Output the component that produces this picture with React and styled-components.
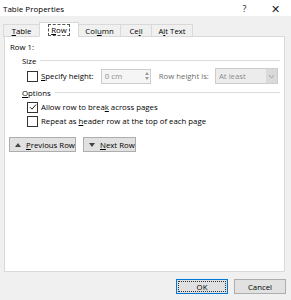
import React from 'react'
import styled, { createGlobalStyle } from 'styled-components'

const Global = createGlobalStyle`
    body {
        margin: 0;
        background: #f0f0f0;
        font-family: "Open Sans", "Noto Sans", sans-serif;
        font-size: 7.8px;
        color: #000;
    }
`

const Dialog = styled.div`
    width: 291px;
    height: 300px;
    display: flex;
    flex-direction: column;
    background: #f0f0f0;
    overflow: hidden;
    white-space: nowrap;
`

const TitleBar = styled.div`
    height: 16px;
    background: #fff;
    display: flex;
    align-items: center;
    padding-left: 3px;
    font-size: 8px;
`

const Title = styled.div`
    flex: 1;
`

const TitleButton = styled.div`
    width: 31px;
    text-align: center;
    font-size: ${props => props.size || '9px'};
    color: #222;
`

const TabStrip = styled.div`
    height: 20px;
    display: flex;
    align-items: flex-end;
    padding-left: 4px;
    position: relative;
    z-index: 1;
`

const Tab = styled.div`
    height: ${props => props.active ? '15px' : '13px'};
    width: ${props => props.w}px;
    display: flex;
    align-items: center;
    justify-content: center;
    background: ${props => props.active ? '#fff' : '#f0f0f0'};
    border: 1px solid #d9d9d9;
    border-bottom: ${props => props.active ? '1px solid #fff' : '1px solid #d9d9d9'};
    margin-left: -1px;
    margin-bottom: -1px;
    box-sizing: border-box;
`

const TabLabel = styled.span`
    padding: 0 2px;
    border: 1px dashed ${props => props.active ? '#555' : 'transparent'};
    line-height: 10px;
`

const Panel = styled.div`
    height: 236px;
    margin: 0 6px 0 4px;
    background: #fff;
    border: 1px solid #d9d9d9;
    box-sizing: border-box;
    padding: 5px 4px 0 5px;
    display: flex;
    flex-direction: column;
`

const Heading = styled.div`
    height: 11px;
    line-height: 11px;
`

const GroupTitle = styled.div`
    display: flex;
    align-items: center;
    gap: 4px;
    margin-left: 12px;
    height: 11px;
    margin-top: ${props => props.top || 0}px;
`

const Rule = styled.div`
    flex: 1;
    height: 1px;
    background: #dcdcdc;
`

const Row = styled.div`
    display: flex;
    align-items: center;
    margin-left: 17px;
    height: ${props => props.h || 14}px;
    margin-top: ${props => props.top || 0}px;
`

const Box = styled.div`
    width: 9px;
    height: 9px;
    border: 1px solid #333;
    background: #fff;
    margin-right: 3px;
    display: flex;
    align-items: center;
    justify-content: center;
    flex-shrink: 0;
`

const Label = styled.span`
    color: ${props => props.disabled ? '#6d6d6d' : '#000'};
    margin-left: ${props => props.ml || 0}px;
`

const SpinField = styled.div`
    width: 50px;
    height: 15px;
    border: 1px solid #cccccc;
    background: #f5f5f5;
    box-sizing: border-box;
    display: flex;
    align-items: center;
    padding-left: 3px;
    color: #8c8c8c;
    margin-left: 7px;
    flex-shrink: 0;
`

const SpinArrows = styled.div`
    margin-left: auto;
    width: 6px;
    display: flex;
    flex-direction: column;
    align-items: center;
    gap: 2px;
`

const Select = styled.div`
    width: 63px;
    height: 16px;
    border: 1px solid #cccccc;
    background: #ececec;
    box-sizing: border-box;
    display: flex;
    align-items: center;
    padding-left: 3px;
    color: #8c8c8c;
    margin-left: 6px;
    flex-shrink: 0;
`

const SelectArrow = styled.div`
    margin-left: auto;
    width: 11px;
    height: 14px;
    background: #dadada;
    display: flex;
    align-items: center;
    justify-content: center;
`

const NavRow = styled.div`
    display: flex;
    gap: 7px;
    margin-top: 9px;
    margin-left: -1px;
`

const NavButton = styled.div`
    width: ${props => props.w}px;
    height: 15px;
    box-sizing: border-box;
    border: 1px solid #adadad;
    background: #e1e1e1;
    display: flex;
    align-items: center;
    padding-left: 5px;
    gap: 5px;
`

const Footer = styled.div`
    display: flex;
    justify-content: flex-end;
    gap: 6px;
    padding: 7px 5px 0 0;
`

const DialogButton = styled.div`
    width: 52px;
    height: 15px;
    box-sizing: border-box;
    border: 1px solid ${props => props.primary ? '#0078d7' : '#adadad'};
    background: #e1e1e1;
    display: flex;
    align-items: center;
    justify-content: center;
    position: relative;
`

const FocusRing = styled.div`
    position: absolute;
    inset: 1px;
    border: 1px dotted #333;
`

const Check = () => (
    <svg width="8" height="8" viewBox="0 0 8 8">
        <path d="M1 4.2 L3 6.2 L7 1.5" fill="none" stroke="#222" strokeWidth="1" />
    </svg>
)

const Tri = ({ up }) => (
    <svg width="6" height="4" viewBox="0 0 6 4">
        <path d={up ? 'M0 4 L3 0 L6 4 Z' : 'M0 0 L3 4 L6 0 Z'} fill="#444" />
    </svg>
)

const tabs = [
    { key: 'T', rest: 'able', w: 37 },
    { key: 'R', rest: 'ow', w: 40, active: true },
    { pre: 'Col', key: 'u', rest: 'mn', w: 43 },
    { pre: 'Ce', key: 'l', rest: 'l', w: 32 },
    { pre: 'A', key: 'l', rest: 't Text', w: 42 },
]

export default function App() {
    return (
        <Dialog>
            <Global />
            <TitleBar>
                <Title>Table Properties</Title>
                <TitleButton>?</TitleButton>
                <TitleButton size="11px">✕</TitleButton>
            </TitleBar>
            <TabStrip>
                {tabs.map((t, i) => (
                    <Tab key={i} w={t.w} active={t.active}>
                        <TabLabel active={t.active}>
                            {t.pre}<u>{t.key}</u>{t.rest}
                        </TabLabel>
                    </Tab>
                ))}
            </TabStrip>
            <Panel>
                <Heading>Row 1:</Heading>
                <GroupTitle top={2}><span>Size</span><Rule /></GroupTitle>
                <Row h={16} top={2}>
                    <Box />
                    <Label><u>S</u>pecify height:</Label>
                    <SpinField>
                        0 cm
                        <SpinArrows>
                            <svg width="4" height="3" viewBox="0 0 4 3"><path d="M0 3 L2 0 L4 3 Z" fill="#999" /></svg>
                            <svg width="4" height="3" viewBox="0 0 4 3"><path d="M0 0 L2 3 L4 0 Z" fill="#999" /></svg>
                        </SpinArrows>
                    </SpinField>
                    <Label disabled ml={8}>Row height is:</Label>
                    <Select>
                        At least
                        <SelectArrow>
                            <svg width="5" height="3" viewBox="0 0 5 3"><path d="M0 0 L2.5 3 L5 0" fill="none" stroke="#999" strokeWidth="0.8" /></svg>
                        </SelectArrow>
                    </Select>
                </Row>
                <GroupTitle top={3}><span><u>O</u>ptions</span><Rule /></GroupTitle>
                <Row top={2}>
                    <Box><Check /></Box>
                    <Label>Allow row to brea<u>k</u> across pages</Label>
                </Row>
                <Row>
                    <Box />
                    <Label>Repeat as <u>h</u>eader row at the top of each page</Label>
                </Row>
                <NavRow>
                    <NavButton w={67}><Tri up /><span><u>P</u>revious Row</span></NavButton>
                    <NavButton w={53}><Tri /><span><u>N</u>ext Row</span></NavButton>
                </NavRow>
            </Panel>
            <Footer>
                <DialogButton primary><FocusRing />OK</DialogButton>
                <DialogButton>Cancel</DialogButton>
            </Footer>
        </Dialog>
    )
}
